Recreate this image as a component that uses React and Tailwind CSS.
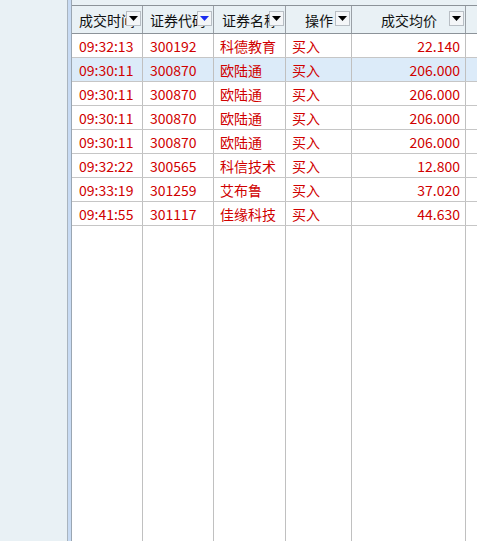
const rows = [
  { time: '09:32:13', code: '300192', name: '科德教育', op: '买入', price: '22.140' },
  { time: '09:30:11', code: '300870', name: '欧陆通', op: '买入', price: '206.000', selected: true },
  { time: '09:30:11', code: '300870', name: '欧陆通', op: '买入', price: '206.000' },
  { time: '09:30:11', code: '300870', name: '欧陆通', op: '买入', price: '206.000' },
  { time: '09:30:11', code: '300870', name: '欧陆通', op: '买入', price: '206.000' },
  { time: '09:32:22', code: '300565', name: '科信技术', op: '买入', price: '12.800' },
  { time: '09:33:19', code: '301259', name: '艾布鲁', op: '买入', price: '37.020' },
  { time: '09:41:55', code: '301117', name: '佳缘科技', op: '买入', price: '44.630' },
]

const cols = 'grid grid-cols-[71px_71px_72px_66px_114px_1fr]'

function DropBtn({ blue }) {
  return (
    <span className="absolute right-[1px] top-[5px] w-[15px] h-[15px] bg-[#f4f6f8] border border-[#b8bec4] flex items-center justify-center">
      <svg width="9" height="5" viewBox="0 0 9 5">
        <path d="M0 0h9L4.5 5z" fill={blue ? '#1a2cf0' : '#000'} />
      </svg>
    </span>
  )
}

function HeadCell({ label, blue, pad = 'pl-[7px]' }) {
  return (
    <div className={`relative h-full border-r border-[#9aa0a6] overflow-hidden whitespace-nowrap flex items-center ${pad}`}>
      <span>{label}</span>
      <DropBtn blue={blue} />
    </div>
  )
}

export default function App() {
  return (
    <div
      className="w-[477px] h-[541px] flex overflow-hidden bg-[#e9f1f5] text-[14px]"
      style={{ fontFamily: '"Noto Sans CJK SC", "Noto Sans", sans-serif' }}
    >
      <div className="w-[68px] shrink-0 border-r border-[#a9b4be]" />
      <div className="w-[3px] shrink-0 bg-[#c8dbf3]" />
      <div className="flex-1 flex flex-col border-l border-[#9aa6b2] min-w-0">
        <div className="h-[5px] bg-[#e9f1f5]" />
        <div className={`${cols} h-[29px] bg-[#e9f1f5] border-y border-[#8c9399] text-[#111] leading-none`}>
          <HeadCell label="成交时间" />
          <HeadCell label="证券代码" blue />
          <HeadCell label="证券名称" pad="pl-[8px]" />
          <HeadCell label="操作" pad="pl-[19px]" />
          <HeadCell label="成交均价" pad="pl-[29px]" />
          <div />
        </div>
        <div className="flex-1 flex flex-col bg-white text-[#d00000]">
          {rows.map((r, i) => (
            <div
              key={i}
              className={`${cols} h-[24px] border-b border-[#c6c6c6] leading-none ${r.selected ? 'bg-[#dcebf9]' : ''}`}
            >
              <div className="border-r border-[#c0c0c0] flex items-center pl-[7px]">{r.time}</div>
              <div className="border-r border-[#c0c0c0] flex items-center pl-[7px]">{r.code}</div>
              <div className="border-r border-[#c0c0c0] flex items-center pl-[6px] whitespace-nowrap">{r.name}</div>
              <div className="border-r border-[#c0c0c0] flex items-center pl-[6px]">{r.op}</div>
              <div className="border-r border-[#c0c0c0] flex items-center justify-end pr-[5px]">{r.price}</div>
              <div />
            </div>
          ))}
          <div className={`${cols} flex-1`}>
            <div className="border-r border-[#c0c0c0]" />
            <div className="border-r border-[#c0c0c0]" />
            <div className="border-r border-[#c0c0c0]" />
            <div className="border-r border-[#c0c0c0]" />
            <div className="border-r border-[#c0c0c0]" />
            <div />
          </div>
        </div>
      </div>
    </div>
  )
}
